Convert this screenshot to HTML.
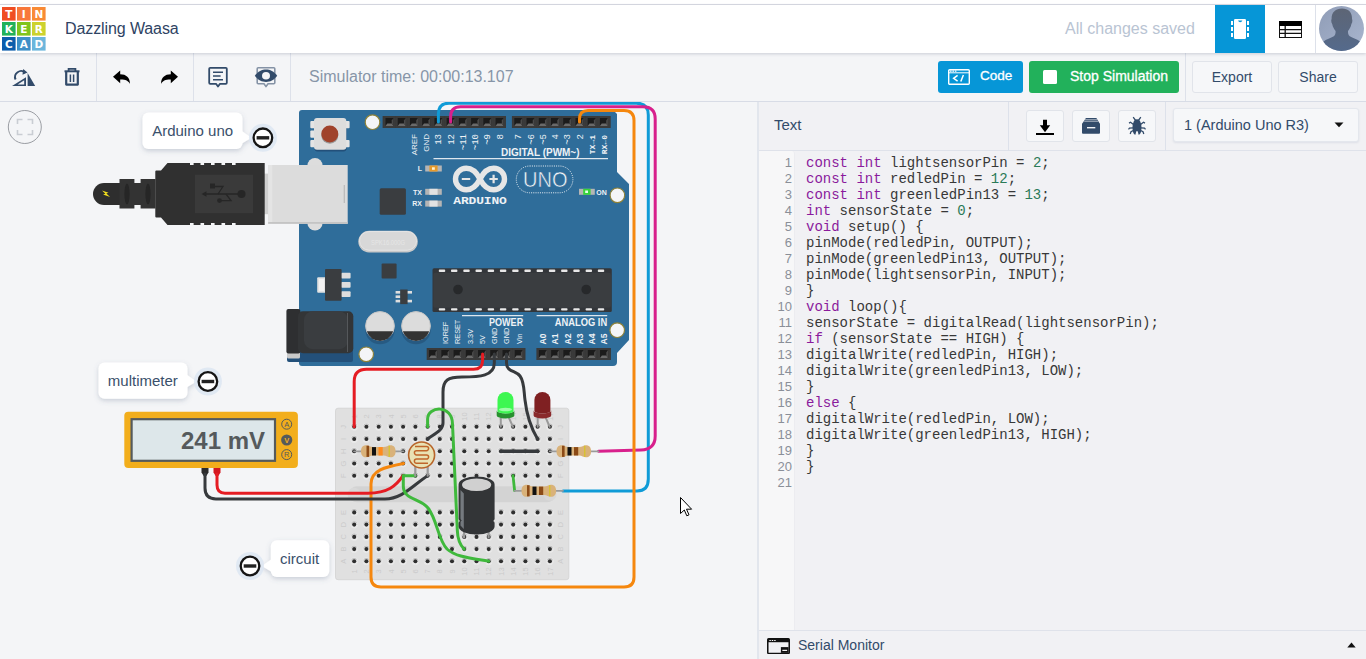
<!DOCTYPE html>
<html><head><meta charset="utf-8"><title>Dazzling Waasa</title>
<style>
*{box-sizing:border-box;margin:0;padding:0}
html,body{width:1366px;height:659px;overflow:hidden;background:#f4f5f7;font-family:"Liberation Sans",sans-serif;color:#324b6a}
.abs{position:absolute}
#topline{left:0;top:0;width:1366px;height:5px;background:#fff;border-bottom:1px solid #d9dbe3}
#topbar{left:0;top:5px;width:1366px;height:48px;background:#fff;box-shadow:0 1px 3px rgba(60,70,100,.22);z-index:5}
#logo{left:2px;top:2px;width:44px;height:44px}
#title{left:65px;top:14px;font-size:16px;line-height:20px;color:#2e4363;letter-spacing:-0.1px}
#saved{left:1065px;top:14px;font-size:16px;line-height:20px;color:#b9c4d3}
#circbtn{left:1215px;top:0;width:50px;height:48px;background:#0696d7}
#avatar{left:1319px;top:1px;width:45px;height:45px}
#toolbar{left:0;top:53px;width:1366px;height:49px;background:#f4f5f7;border-bottom:1px solid #d8dce6}
.vdiv{position:absolute;top:0;width:1px;height:48px;background:#dde1ea}
#simtime{left:309px;top:14px;font-size:16px;line-height:20px;color:#8795a8}
.btn{position:absolute;top:8px;height:32px;border-radius:3px;font-size:14px;line-height:32px;white-space:nowrap}
#codebtn{left:938px;width:85px;background:#0696d7;color:#fff;padding-left:42px;line-height:30px;font-size:13.500px;-webkit-text-stroke:.3px #fff}
#stopbtn{left:1029px;width:150px;background:#22b15b;color:#fff;padding-left:41px;line-height:30px;-webkit-text-stroke:.3px #fff}
#exportbtn{left:1192px;width:80px;border:1px solid #e1e4ea;color:#324b6a;background:#f6f7f9;line-height:30px;text-align:center}
#sharebtn{left:1278px;width:80px;border:1px solid #e1e4ea;color:#324b6a;background:#f6f7f9;line-height:30px;text-align:center}
#canvas{left:0;top:102px;width:757px;height:557px;background:#f4f5f7;overflow:hidden}
#panel{left:757px;top:102px;width:609px;height:557px;background:#f1f1f4;border-left:2px solid #e2e6ed}
#phead{left:0;top:0;width:607px;height:49px;background:#f1f1f4;border-bottom:1px solid #dfe2ea}
#gutter{left:0;top:49px;width:36px;height:479px;background:#f7f7f8;border-right:1px solid #ececf0;border-top-right-radius:3px}
#code{left:47px;top:53px;font-family:"Liberation Mono",monospace;font-size:14px;line-height:16px;color:#383838;white-space:pre}
#lnums{left:0;top:53px;width:33px;text-align:right;font-family:"Liberation Sans",sans-serif;font-size:13px;line-height:16px;color:#8a8f98;white-space:pre}
.hb{position:absolute;top:8px;width:38px;height:32px;border:1px solid #e1e4ea;border-radius:3px;background:#f6f7f9}
.k{color:#8a1a9c}.n{color:#2a7a57}
#serial{left:0;top:528px;width:607px;height:29px;border-top:1px solid #dfe2ea;background:#f1f1f4}
</style></head><body>
<div id="topline" class="abs"></div>
<div id="topbar" class="abs">
  <svg id="logo" class="abs" viewBox="0 0 44 44"><rect x="0" y="0" width="13.6" height="13.6" fill="#f04d23"/><text x="6.8" y="10.7" text-anchor="middle" font-family="DejaVu Sans, Liberation Sans, sans-serif" font-weight="bold" font-size="10.5" fill="#fff">T</text><rect x="15" y="0" width="13.6" height="13.6" fill="#f8783b"/><text x="21.8" y="10.7" text-anchor="middle" font-family="DejaVu Sans, Liberation Sans, sans-serif" font-weight="bold" font-size="10.5" fill="#fff">I</text><rect x="30" y="0" width="13.6" height="13.6" fill="#f98a35"/><text x="36.8" y="10.7" text-anchor="middle" font-family="DejaVu Sans, Liberation Sans, sans-serif" font-weight="bold" font-size="10.5" fill="#fff">N</text><rect x="0" y="15" width="13.6" height="13.6" fill="#22b15a"/><text x="6.8" y="25.7" text-anchor="middle" font-family="DejaVu Sans, Liberation Sans, sans-serif" font-weight="bold" font-size="10.5" fill="#fff">K</text><rect x="15" y="15" width="13.6" height="13.6" fill="#80c41c"/><text x="21.8" y="25.7" text-anchor="middle" font-family="DejaVu Sans, Liberation Sans, sans-serif" font-weight="bold" font-size="10.5" fill="#fff">E</text><rect x="30" y="15" width="13.6" height="13.6" fill="#cdd22d"/><text x="36.8" y="25.7" text-anchor="middle" font-family="DejaVu Sans, Liberation Sans, sans-serif" font-weight="bold" font-size="10.5" fill="#fff">R</text><rect x="0" y="30" width="13.6" height="13.6" fill="#0c5dac"/><text x="6.8" y="40.7" text-anchor="middle" font-family="DejaVu Sans, Liberation Sans, sans-serif" font-weight="bold" font-size="10.5" fill="#fff">C</text><rect x="15" y="30" width="13.6" height="13.6" fill="#3e90c8"/><text x="21.8" y="40.7" text-anchor="middle" font-family="DejaVu Sans, Liberation Sans, sans-serif" font-weight="bold" font-size="10.5" fill="#fff">A</text><rect x="30" y="30" width="13.6" height="13.6" fill="#6cb6dc"/><text x="36.8" y="40.7" text-anchor="middle" font-family="DejaVu Sans, Liberation Sans, sans-serif" font-weight="bold" font-size="10.5" fill="#fff">D</text></svg>
  <div id="title" class="abs">Dazzling Waasa</div>
  <div id="saved" class="abs">All changes saved</div>
  <div id="circbtn" class="abs"><svg class="abs" style="left:0;top:0" width="50" height="48" viewBox="0 0 50 48"><rect x="19" y="14" width="12" height="20" rx="1.2" fill="#fff"/><path d="M23 15.5h4.4q-.6 1.8-2.2 1.8t-2.2-1.8z" fill="#0696d7"/><g fill="#fff"><rect x="16" y="16" width="2" height="4"/><rect x="16" y="22" width="2" height="4"/><rect x="16" y="28" width="2" height="4"/><rect x="32" y="16" width="2" height="4"/><rect x="32" y="22" width="2" height="4"/><rect x="32" y="28" width="2" height="4"/></g></svg></div>
  <svg class="abs" style="left:1279px;top:16px" width="23" height="17" viewBox="0 0 23 17"><rect x="0.5" y="0.5" width="22" height="16" fill="#fff" stroke="#111" stroke-width="1"/><rect x="0" y="0" width="23" height="5" fill="#000"/><path d="M6.2 5v12M0 8.6h23M0 12.4h23" stroke="#111" stroke-width="1.3" fill="none"/></svg>
  <div class="abs" style="left:1315px;top:0;width:1px;height:48px;background:#dde1ea"></div>
  <div id="avatar" class="abs"><svg width="45" height="45" viewBox="0 0 45 45"><defs><linearGradient id="avg" x1="0" y1="0" x2="1" y2="1"><stop offset="0" stop-color="#8f9cb6"/><stop offset="1" stop-color="#a9b6cf"/></linearGradient><linearGradient id="avs" x1="0" y1="0" x2="0" y2="1"><stop offset="0" stop-color="#5d6575"/><stop offset="1" stop-color="#546a8c"/></linearGradient><clipPath id="avc"><circle cx="22.5" cy="22.5" r="22.5"/></clipPath></defs><g clip-path="url(#avc)"><rect width="45" height="45" fill="url(#avg)"/><path d="M23 2.5c6.5 0 10.3 4 10 10.5c.6 1 .5 3.500-.6 5c-.5 3-2.200 5.500-3.400 7c0 2.500.2 4 1.800 5.200c3.500 2.300 9.500 3 12.500 7.800v8h-41v-8c3-4.800 9-5.500 12.500-7.800c1.600-1.200 1.800-2.700 1.800-5.200c-1.200-1.500-2.900-4-3.400-7c-1.100-1.500-1.200-4-.6-5c-.3-6.500 3.900-10.500 10.400-10.500z" fill="url(#avs)"/></g></svg></div>
</div>
<div id="toolbar" class="abs">
  <div class="vdiv" style="left:96px"></div>
  <div class="vdiv" style="left:193px"></div>
  <div class="vdiv" style="left:290px"></div>
  <div class="vdiv" style="left:1185px"></div>

  <svg class="abs" style="left:10px;top:14px" width="28" height="20" viewBox="0 0 28 20"><g fill="none" stroke="#324b6a" stroke-width="1.9"><path d="M5.600 12.500a6 6 0 0 1 9.600-6.800"/></g><path d="M13.200 2l4.300 3.600-5 2.200z" fill="#324b6a"/><path d="M2 19L16 10.300V19z" fill="#324b6a"/><path d="M7.600 17.400l6.600-4.100v4.100z" fill="#f4f5f7"/><path d="M17.600 6L25.200 19H17.600z" fill="#324b6a"/></svg>
  <svg class="abs" style="left:63px;top:14px" width="18" height="20" viewBox="0 0 18 20"><path d="M1.500 4.300h15" stroke="#324b6a" stroke-width="2" fill="none"/><path d="M5.600 4V1.800h6.800V4" stroke="#324b6a" stroke-width="1.800" fill="none"/><path d="M3.200 5v12.600h11.600V5" stroke="#324b6a" stroke-width="2.200" fill="none" stroke-linejoin="round"/><path d="M7.400 7.500v7.500M10.600 7.500v7.500" stroke="#324b6a" stroke-width="1.500" fill="none"/></svg>
  <svg class="abs" style="left:112px;top:17px" width="20" height="15" viewBox="0 0 20 15"><path d="M8.200 0.600v3.700c6 0 9.800 3.300 9.800 9.700c-1.700-3.400-4.500-4.600-9.800-4.500v3.700L1 6.800z" fill="#000"/></svg>
  <svg class="abs" style="left:159px;top:17px" width="20" height="15" viewBox="0 0 20 15"><path d="M11.800 0.600v3.700c-6 0-9.800 3.300-9.800 9.700c1.700-3.400 4.500-4.600 9.800-4.500v3.700L19 6.800z" fill="#000"/></svg>
  <svg class="abs" style="left:208px;top:13px" width="20" height="22" viewBox="0 0 20 22"><path d="M2.200 1.800h15.600q1 0 1 1v14q0 1-1 1h-5.800L10 20.600 8 17.800H2.200q-1 0-1-1v-14q0-1 1-1z" fill="none" stroke="#324b6a" stroke-width="1.800" stroke-linejoin="round"/><path d="M5 6.200h10M5 10h7.600M5 13.800h10" stroke="#324b6a" stroke-width="1.600" fill="none"/></svg>
  <svg class="abs" style="left:254px;top:13px" width="24" height="22" viewBox="0 0 24 22"><path d="M4.200 1.800h15.600q1 0 1 1v14q0 1-1 1h-5.800L12 20.600 10 17.800H4.200q-1 0-1-1v-14q0-1 1-1z" fill="none" stroke="#8593a6" stroke-width="1.600" stroke-linejoin="round"/><path d="M0.800 9.800C4 5.400 8 3.600 12 3.600s8 1.800 11.200 6.200C20 14.200 16 16 12 16S4 14.200 0.800 9.800z" fill="#324b6a"/><ellipse cx="12" cy="9.800" rx="4" ry="3.800" fill="#f4f5f7"/></svg>
  <div id="simtime" class="abs">Simulator time: 00:00:13.107</div>
  <div id="codebtn" class="btn"><svg class="abs" style="left:10px;top:8px" width="22" height="16" viewBox="0 0 22 16"><rect x="0.700" y="0.700" width="20.600" height="14.600" rx="1" fill="none" stroke="#fff" stroke-width="1.400"/><path d="M1 3.800h20" stroke="#fff" stroke-width="1"/><path d="M2 1.400h1.600v1.300H2zM4.400 1.400h1.600v1.300H4.400zM6.800 1.400h1.600v1.300H6.800z" fill="#fff"/><path d="M9.600 6.400L5.600 9.300l4 2.900M15.400 6l-2.600 6.600" fill="none" stroke="#fff" stroke-width="1.500"/></svg>Code</div>
  <div id="stopbtn" class="btn"><div class="abs" style="left:14px;top:9px;width:14px;height:14px;background:#fff;border-radius:1.500px"></div>Stop Simulation</div>
  <div id="exportbtn" class="btn">Export</div>
  <div id="sharebtn" class="btn">Share</div>
</div>
<div id="canvas" class="abs">
<!--CANVAS--><svg class="abs" style="left:0;top:0" width="757" height="557" viewBox="0 102 757 557" font-family="Liberation Sans, sans-serif">
<defs>
<filter id="lsh" x="-20%" y="-30%" width="140%" height="180%"><feDropShadow dx="0" dy="2" stdDeviation="2.500" flood-color="#5a6a85" flood-opacity=".28"/></filter>
<g id="pin"><rect x="-6.120" y="-6" width="12.240" height="12" fill="#3a3a3a"/><rect x="-4" y="-4" width="8" height="8" fill="#1b1b1b"/><path d="M-4 4L-2.200 1.600H2.200L4 4z" fill="#6a6a6a"/><path d="M4 -4L2.200 -1.600V1.600L4 4z" fill="#4a4a4a"/></g>
<g id="hole"><circle r="3.700" fill="#ebebeb"/><circle r="3" cy="-.3" fill="#bcbcbc"/><circle r="3" cy=".7" fill="#e9e9e9"/><circle r="2.050" fill="#2f2f2f"/></g>
<g id="minus"><circle r="14" fill="#d9e4f2" opacity=".75"/><circle r="9.300" fill="#fff" stroke="#151515" stroke-width="2.300"/><rect x="-6.300" y="-1.700" width="12.600" height="3.400" fill="#222"/></g>
</defs>
<g><circle cx="24.800" cy="127" r="16.500" fill="none" stroke="#9a9da3" stroke-width="1"/><path d="M17.500 124v-4.500h5M27.500 119.500h5v4.500M32.500 130v4.500h-5M22.500 134.500h-5v-4.500" fill="none" stroke="#c9cdd3" stroke-width="1.600"/></g>
<g id="arduino">
<path d="M302 110H613L617 114V172L629 184V340L617 353V362Q617 366 613 366H302Q299 366 299 363V113Q299 110 302 110z" fill="#2f6d9a"/>
<circle cx="315" cy="165.500" r="7.600" fill="#dddddd"/><circle cx="315" cy="223" r="7.600" fill="#dddddd"/>
<circle cx="372.5" cy="122.2" r="7.300" fill="#f4f5f7" stroke="#8f8238" stroke-width="1.200"/>
<circle cx="617.4" cy="195.3" r="7.300" fill="#f4f5f7" stroke="#8f8238" stroke-width="1.200"/>
<circle cx="617.2" cy="330.2" r="7.300" fill="#f4f5f7" stroke="#8f8238" stroke-width="1.200"/>
<circle cx="366.2" cy="354.3" r="7.300" fill="#f4f5f7" stroke="#8f8238" stroke-width="1.200"/>
<rect x="314.500" y="120" width="32" height="31.500" rx="3" fill="#23507a"/>
<rect x="310.300" y="121" width="5" height="7.200" rx="1" fill="#e4e4e4"/>
<rect x="310.300" y="130.5" width="5" height="7.200" rx="1" fill="#e4e4e4"/>
<rect x="310.300" y="140" width="5" height="7.200" rx="1" fill="#e4e4e4"/>
<rect x="345" y="121" width="4.600" height="7.200" rx="1" fill="#e4e4e4"/>
<rect x="345" y="140" width="4.600" height="7.200" rx="1" fill="#e4e4e4"/>
<rect x="314" y="118" width="32.300" height="31.800" rx="3" fill="#dddddd"/><circle cx="329.800" cy="135.200" r="8.500" fill="#9a9a9a"/><circle cx="329.800" cy="134" r="8.500" fill="#a0432c"/>
<rect x="382.600" y="116" width="123.3" height="12" fill="#3a3a3a"/>
<use href="#pin" x="389.51" y="122"/>
<use href="#pin" x="401.75" y="122"/>
<use href="#pin" x="413.97" y="122"/>
<use href="#pin" x="426.20" y="122"/>
<use href="#pin" x="438.44" y="122"/>
<use href="#pin" x="450.66" y="122"/>
<use href="#pin" x="462.89" y="122"/>
<use href="#pin" x="475.12" y="122"/>
<use href="#pin" x="487.36" y="122"/>
<use href="#pin" x="499.58" y="122"/>
<rect x="511.900" y="116" width="98.8" height="12" fill="#3a3a3a"/>
<use href="#pin" x="518.32" y="122"/>
<use href="#pin" x="530.55" y="122"/>
<use href="#pin" x="542.78" y="122"/>
<use href="#pin" x="555.01" y="122"/>
<use href="#pin" x="567.24" y="122"/>
<use href="#pin" x="579.47" y="122"/>
<use href="#pin" x="591.70" y="122"/>
<use href="#pin" x="603.93" y="122"/>
<rect x="426.700" y="348" width="98.8" height="12" fill="#3a3a3a"/>
<use href="#pin" x="433.12" y="354"/>
<use href="#pin" x="445.35" y="354"/>
<use href="#pin" x="457.57" y="354"/>
<use href="#pin" x="469.81" y="354"/>
<use href="#pin" x="482.04" y="354"/>
<use href="#pin" x="494.26" y="354"/>
<use href="#pin" x="506.50" y="354"/>
<use href="#pin" x="518.73" y="354"/>
<rect x="536.500" y="348" width="74.4" height="12" fill="#3a3a3a"/>
<use href="#pin" x="542.91" y="354"/>
<use href="#pin" x="555.14" y="354"/>
<use href="#pin" x="567.38" y="354"/>
<use href="#pin" x="579.61" y="354"/>
<use href="#pin" x="591.83" y="354"/>
<use href="#pin" x="604.06" y="354"/>
<text transform="translate(417.0 134) rotate(-90)" text-anchor="end" font-size="8" font-weight="normal" fill="#eef2f6">AREF</text>
<text transform="translate(429.2 134) rotate(-90)" text-anchor="end" font-size="8" font-weight="normal" fill="#eef2f6">GND</text>
<text transform="translate(441.4 134) rotate(-90)" text-anchor="end" font-size="9" font-weight="normal" fill="#eef2f6" font-family="Liberation Mono, monospace">13</text>
<text transform="translate(453.7 134) rotate(-90)" text-anchor="end" font-size="9" font-weight="normal" fill="#eef2f6" font-family="Liberation Mono, monospace">12</text>
<text transform="translate(465.9 134) rotate(-90)" text-anchor="end" font-size="9" font-weight="normal" fill="#eef2f6" font-family="Liberation Mono, monospace">~11</text>
<text transform="translate(478.1 134) rotate(-90)" text-anchor="end" font-size="9" font-weight="normal" fill="#eef2f6" font-family="Liberation Mono, monospace">~10</text>
<text transform="translate(490.4 134) rotate(-90)" text-anchor="end" font-size="9" font-weight="normal" fill="#eef2f6" font-family="Liberation Mono, monospace">~9</text>
<text transform="translate(502.6 134) rotate(-90)" text-anchor="end" font-size="9" font-weight="normal" fill="#eef2f6" font-family="Liberation Mono, monospace">8</text>
<text transform="translate(521.3 134) rotate(-90)" text-anchor="end" font-size="9" font-weight="normal" fill="#eef2f6" font-family="Liberation Mono, monospace">7</text>
<text transform="translate(533.5 134) rotate(-90)" text-anchor="end" font-size="9" font-weight="normal" fill="#eef2f6" font-family="Liberation Mono, monospace">~6</text>
<text transform="translate(545.8 134) rotate(-90)" text-anchor="end" font-size="9" font-weight="normal" fill="#eef2f6" font-family="Liberation Mono, monospace">~5</text>
<text transform="translate(558.0 134) rotate(-90)" text-anchor="end" font-size="9" font-weight="normal" fill="#eef2f6" font-family="Liberation Mono, monospace">4</text>
<text transform="translate(570.2 134) rotate(-90)" text-anchor="end" font-size="9" font-weight="normal" fill="#eef2f6" font-family="Liberation Mono, monospace">~3</text>
<text transform="translate(582.5 134) rotate(-90)" text-anchor="end" font-size="9" font-weight="normal" fill="#eef2f6" font-family="Liberation Mono, monospace">2</text>
<text transform="translate(594.7 135) rotate(-90)" text-anchor="end" font-size="8" font-weight="bold" fill="#eef2f6" font-family="Liberation Mono, monospace">TX→1</text>
<text transform="translate(606.9 135) rotate(-90)" text-anchor="end" font-size="8" font-weight="bold" fill="#eef2f6" font-family="Liberation Mono, monospace">RX←0</text>
<text x="579.500" y="155.600" text-anchor="end" font-size="10" font-weight="bold" fill="#eef2f6" textLength="78.500" lengthAdjust="spacingAndGlyphs">DIGITAL (PWM~)</text>
<path d="M433.500 158.600H608" stroke="#dfe7ee" stroke-width="1.400"/>
<rect x="425.2" y="165.5" width="16.6" height="6" fill="#b5b5b5"/><rect x="429.4" y="165.5" width="8.200000000000001" height="6" fill="#e59a2c"/>
<rect x="432" y="167.300" width="2.800" height="2.500" fill="#fff3d0"/>
<rect x="425.2" y="188.8" width="16.6" height="6" fill="#b5b5b5"/><rect x="429.4" y="188.8" width="8.200000000000001" height="6" fill="#e2e2e2"/>
<rect x="425.2" y="200.6" width="16.6" height="6" fill="#b5b5b5"/><rect x="429.4" y="200.6" width="8.200000000000001" height="6" fill="#e2e2e2"/>
<text x="422" y="171.400" text-anchor="end" font-size="7" font-weight="bold" fill="#eef2f6">L</text>
<text x="422" y="194.600" text-anchor="end" font-size="7" font-weight="bold" fill="#eef2f6">TX</text>
<text x="422" y="206.400" text-anchor="end" font-size="7" font-weight="bold" fill="#eef2f6">RX</text>
<rect x="579" y="188.8" width="15.8" height="6" fill="#b5b5b5"/><rect x="583.2" y="188.8" width="7.4" height="6" fill="#35d43a"/>
<rect x="585.200" y="190.500" width="2.800" height="2.500" fill="#e8ffe8"/>
<text x="596.300" y="194.600" font-size="7" font-weight="bold" fill="#eef2f6">ON</text>
<g fill="none" stroke="#e6e6e6" stroke-width="5.400"><path d="M480 179C476 171 471 168.200 466.300 168.200a10.800 10.800 0 0 0 0 21.600C471 189.800 476 187 480 179C484 171 489 168.200 493.700 168.200a10.800 10.800 0 0 1 0 21.600C489 189.800 484 187 480 179z"/></g>
<path d="M461.800 179h8.400M489.400 179h8.400M493.600 174.800v8.400" stroke="#e6e6e6" stroke-width="2.200" fill="none"/>
<text x="480" y="204.200" text-anchor="middle" font-family="Liberation Mono, monospace" font-weight="bold" font-size="11.500" letter-spacing="-.1" fill="#eef2f6" textLength="53.500" lengthAdjust="spacingAndGlyphs">ARDUINO</text>
<rect x="516.300" y="166" width="56.600" height="26.800" rx="13.400" fill="none" stroke="#eef2f6" stroke-width="1" stroke-dasharray="1 1.200"/>
<text x="545.300" y="187.300" text-anchor="middle" font-size="22.500" fill="#f8fafc" stroke="#2f6d9a" stroke-width=".55" textLength="44.500" lengthAdjust="spacingAndGlyphs">UNO</text>
<rect x="379.700" y="188.200" width="26.200" height="26.600" rx="1.500" fill="#3a3d40"/>
<rect x="381.600" y="263.600" width="15" height="15" rx="1" fill="#3a3d40"/>
<rect x="358.300" y="230.800" width="59.500" height="21.600" rx="10.800" fill="#c9c9c9"/><rect x="359.600" y="231.600" width="56.900" height="18.600" rx="9.300" fill="#d8d8d8" stroke="#e6e6e6" stroke-width="1"/>
<text x="388" y="244.500" text-anchor="middle" font-size="8" fill="#e6e6e6" textLength="34" lengthAdjust="spacingAndGlyphs">SPK16.000G</text>
<rect x="317.200" y="277.200" width="9" height="15.600" rx="1" fill="#e2e2e2"/><rect x="319" y="279" width="5" height="12" fill="#f2f2f2"/>
<rect x="341" y="272.7" width="9.600" height="5.800" rx="1" fill="#dedede"/>
<rect x="341" y="282" width="9.600" height="5.800" rx="1" fill="#dedede"/>
<rect x="341" y="291.2" width="9.600" height="5.800" rx="1" fill="#dedede"/>
<rect x="325" y="268.900" width="16.600" height="31.800" rx="1" fill="#3a3d40"/>
<rect x="395.600" y="291" width="5" height="2.600" fill="#dedede"/>
<rect x="395.600" y="295.4" width="5" height="2.600" fill="#dedede"/>
<rect x="395.600" y="299.8" width="5" height="2.600" fill="#dedede"/>
<rect x="407" y="291" width="5" height="2.600" fill="#dedede"/>
<rect x="407" y="299.8" width="5" height="2.600" fill="#dedede"/>
<rect x="400.200" y="289.500" width="7.400" height="14.600" fill="#3a3d40"/>
<rect x="432.500" y="268.200" width="179.300" height="43.800" rx="1.500" fill="#33363a"/>
<rect x="438.8" y="269.600" width="6.400" height="2.400" rx=".8" fill="#e8e8e8"/><rect x="438.8" y="308.200" width="6.400" height="2.400" rx=".8" fill="#e8e8e8"/>
<rect x="451.0" y="269.600" width="6.400" height="2.400" rx=".8" fill="#e8e8e8"/><rect x="451.0" y="308.200" width="6.400" height="2.400" rx=".8" fill="#e8e8e8"/>
<rect x="463.3" y="269.600" width="6.400" height="2.400" rx=".8" fill="#e8e8e8"/><rect x="463.3" y="308.200" width="6.400" height="2.400" rx=".8" fill="#e8e8e8"/>
<rect x="475.5" y="269.600" width="6.400" height="2.400" rx=".8" fill="#e8e8e8"/><rect x="475.5" y="308.200" width="6.400" height="2.400" rx=".8" fill="#e8e8e8"/>
<rect x="487.7" y="269.600" width="6.400" height="2.400" rx=".8" fill="#e8e8e8"/><rect x="487.7" y="308.200" width="6.400" height="2.400" rx=".8" fill="#e8e8e8"/>
<rect x="499.9" y="269.600" width="6.400" height="2.400" rx=".8" fill="#e8e8e8"/><rect x="499.9" y="308.200" width="6.400" height="2.400" rx=".8" fill="#e8e8e8"/>
<rect x="512.2" y="269.600" width="6.400" height="2.400" rx=".8" fill="#e8e8e8"/><rect x="512.2" y="308.200" width="6.400" height="2.400" rx=".8" fill="#e8e8e8"/>
<rect x="524.4" y="269.600" width="6.400" height="2.400" rx=".8" fill="#e8e8e8"/><rect x="524.4" y="308.200" width="6.400" height="2.400" rx=".8" fill="#e8e8e8"/>
<rect x="536.6" y="269.600" width="6.400" height="2.400" rx=".8" fill="#e8e8e8"/><rect x="536.6" y="308.200" width="6.400" height="2.400" rx=".8" fill="#e8e8e8"/>
<rect x="548.9" y="269.600" width="6.400" height="2.400" rx=".8" fill="#e8e8e8"/><rect x="548.9" y="308.200" width="6.400" height="2.400" rx=".8" fill="#e8e8e8"/>
<rect x="561.1" y="269.600" width="6.400" height="2.400" rx=".8" fill="#e8e8e8"/><rect x="561.1" y="308.200" width="6.400" height="2.400" rx=".8" fill="#e8e8e8"/>
<rect x="573.3" y="269.600" width="6.400" height="2.400" rx=".8" fill="#e8e8e8"/><rect x="573.3" y="308.200" width="6.400" height="2.400" rx=".8" fill="#e8e8e8"/>
<rect x="585.6" y="269.600" width="6.400" height="2.400" rx=".8" fill="#e8e8e8"/><rect x="585.6" y="308.200" width="6.400" height="2.400" rx=".8" fill="#e8e8e8"/>
<rect x="597.8" y="269.600" width="6.400" height="2.400" rx=".8" fill="#e8e8e8"/><rect x="597.8" y="308.200" width="6.400" height="2.400" rx=".8" fill="#e8e8e8"/>
<rect x="433.300" y="272.700" width="177.700" height="35" rx="2" fill="#3a3d40"/>
<circle cx="458" cy="289.500" r="4.800" fill="#27292b"/><circle cx="586.200" cy="289.500" r="4.800" fill="#27292b"/>
<path d="M462 315.700H523.200M536.600 315.700H607.200" stroke="#dfe7ee" stroke-width="1.300"/>
<text x="523.200" y="326" text-anchor="end" font-size="10" font-weight="bold" fill="#eef2f6" textLength="34.200" lengthAdjust="spacingAndGlyphs">POWER</text>
<text x="607.200" y="326" text-anchor="end" font-size="10" font-weight="bold" fill="#eef2f6" textLength="52.500" lengthAdjust="spacingAndGlyphs">ANALOG IN</text>
<text transform="translate(448.1 344) rotate(-90)" font-size="7.300" fill="#eef2f6">IOREF</text>
<text transform="translate(460.4 344) rotate(-90)" font-size="7.300" fill="#eef2f6">RESET</text>
<text transform="translate(472.6 344) rotate(-90)" font-size="7.300" fill="#eef2f6">3.3V</text>
<text transform="translate(484.8 344) rotate(-90)" font-size="7.300" fill="#eef2f6">5V</text>
<text transform="translate(497.1 344) rotate(-90)" font-size="7.300" fill="#eef2f6">GND</text>
<text transform="translate(509.3 344) rotate(-90)" font-size="7.300" fill="#eef2f6">GND</text>
<text transform="translate(521.5 344) rotate(-90)" font-size="7.300" fill="#eef2f6">Vin</text>
<text transform="translate(546.1 344.500) rotate(-90)" font-size="8.500" font-weight="bold" fill="#eef2f6">A0</text>
<text transform="translate(558.3 344.500) rotate(-90)" font-size="8.500" font-weight="bold" fill="#eef2f6">A1</text>
<text transform="translate(570.6 344.500) rotate(-90)" font-size="8.500" font-weight="bold" fill="#eef2f6">A2</text>
<text transform="translate(582.8 344.500) rotate(-90)" font-size="8.500" font-weight="bold" fill="#eef2f6">A3</text>
<text transform="translate(595.0 344.500) rotate(-90)" font-size="8.500" font-weight="bold" fill="#eef2f6">A4</text>
<text transform="translate(607.3 344.500) rotate(-90)" font-size="8.500" font-weight="bold" fill="#eef2f6">A5</text>
<circle cx="380" cy="329.500" r="14.800" fill="#275a82"/><circle cx="380" cy="326" r="14.400" fill="#dcdcdc" stroke="#c6c6c6" stroke-width="1"/>
<path d="M366.8 331.200H393.2A13.800 13.800 0 0 1 366.8 331.200z" fill="#333"/>
<circle cx="416" cy="329.500" r="14.800" fill="#275a82"/><circle cx="416" cy="326" r="14.400" fill="#dcdcdc" stroke="#c6c6c6" stroke-width="1"/>
<path d="M402.8 331.200H429.2A13.800 13.800 0 0 1 402.8 331.200z" fill="#333"/>
<rect x="287" y="348" width="66" height="14" rx="2" fill="#23507a"/>
<rect x="287" y="350" width="13" height="8.600" rx="1.500" fill="#c9c9c9"/>
<rect x="286.400" y="309" width="14" height="44.600" rx="2" fill="#2e2f31"/>
<rect x="298" y="311.200" width="55.300" height="42" rx="5" fill="#333537"/><rect x="304" y="311.200" width="44" height="38" rx="9" fill="#3a3d40"/><path d="M347.500 313v39" stroke="#55585b" stroke-width="1"/>
</g>
<g id="usb">
<rect x="264" y="173.600" width="6" height="40.600" fill="#cfcfcf"/>
<rect x="268.200" y="165" width="79.500" height="58.800" fill="#dcdcdc"/><rect x="268.200" y="165" width="4" height="58.800" fill="#e4e4e4"/><rect x="268.200" y="222" width="79.500" height="1.800" fill="#c4c4c4"/><path d="M344.300 185v18" stroke="#b8b8b8" stroke-width="1.200"/>
<path d="M104 183H120V205H104A11 11 0 0 1 104 183z" fill="#2e2e2e"/>
<path d="M119.500 179H134.400V183H140.600V179H155.500V208.600H140.600V205H134.400V208.600H119.500z" fill="#333"/><ellipse cx="127" cy="194" rx="2.600" ry="10.500" fill="#262626"/><ellipse cx="148" cy="194" rx="2.600" ry="10.500" fill="#262626"/>
<path d="M155.300 171.500Q155.300 170.500 156.300 170.500H161L167.500 163H264.700V225H167.500L161 217.500H156.300Q155.300 217.500 155.300 216.500z" fill="#303030"/>
<rect x="190.0" y="162.500" width="3.600" height="2.500" fill="#f4f5f7"/><rect x="190.0" y="223" width="3.600" height="2.500" fill="#f4f5f7"/>
<rect x="200.5" y="162.500" width="3.600" height="2.500" fill="#f4f5f7"/><rect x="200.5" y="223" width="3.600" height="2.500" fill="#f4f5f7"/>
<rect x="211.0" y="162.500" width="3.600" height="2.500" fill="#f4f5f7"/><rect x="211.0" y="223" width="3.600" height="2.500" fill="#f4f5f7"/>
<rect x="221.5" y="162.500" width="3.600" height="2.500" fill="#f4f5f7"/><rect x="221.5" y="223" width="3.600" height="2.500" fill="#f4f5f7"/>
<rect x="232.0" y="162.500" width="3.600" height="2.500" fill="#f4f5f7"/><rect x="232.0" y="223" width="3.600" height="2.500" fill="#f4f5f7"/>
<rect x="195" y="174.700" width="58" height="38.400" fill="#3a3a3a"/>
<g stroke="#262626" fill="#262626" stroke-width="1.300"><path d="M206 194H240" fill="none"/><path d="M201.500 194l5-2.800v5.600z" stroke="none"/><circle cx="241.500" cy="194" r="4" stroke="none"/><path d="M218 194l5-7.500h-8" fill="none"/><rect x="210" y="183.500" width="5" height="5" stroke="none"/><path d="M226 194l5 6.600h-10.500" fill="none"/><circle cx="219.500" cy="200.600" r="2.400" stroke="none"/></g>
<path d="M102 190.500l6.500 2.200-2.200.8 3.800 3.600-7-2.500 2.300-.8z" fill="#f5e21d"/>
</g>
<g id="bb">
<rect x="335.500" y="408.200" width="233.300" height="171.500" rx="2.500" fill="#e0e0e0" stroke="#d2d2d2" stroke-width=".8"/>
<rect x="349" y="486.300" width="206" height="16" rx="8" fill="#d3d3d3"/><circle cx="354" cy="494.300" r="6.500" fill="#d8d8d8"/><circle cx="550" cy="494.300" r="6.500" fill="#d8d8d8"/>
<use href="#hole" x="354.2" y="426.8"/>
<use href="#hole" x="366.4" y="426.8"/>
<use href="#hole" x="378.7" y="426.8"/>
<use href="#hole" x="390.9" y="426.8"/>
<use href="#hole" x="403.1" y="426.8"/>
<use href="#hole" x="415.4" y="426.8"/>
<use href="#hole" x="427.6" y="426.8"/>
<use href="#hole" x="439.8" y="426.8"/>
<use href="#hole" x="452.0" y="426.8"/>
<use href="#hole" x="464.3" y="426.8"/>
<use href="#hole" x="476.5" y="426.8"/>
<use href="#hole" x="488.7" y="426.8"/>
<use href="#hole" x="501.0" y="426.8"/>
<use href="#hole" x="513.2" y="426.8"/>
<use href="#hole" x="525.4" y="426.8"/>
<use href="#hole" x="537.6" y="426.8"/>
<use href="#hole" x="549.9" y="426.8"/>
<text transform="translate(345.500 426.8) rotate(-90)" text-anchor="middle" font-size="7.500" fill="#cbcbcb">J</text>
<text transform="translate(562.500 426.8) rotate(-90)" text-anchor="middle" font-size="7.500" fill="#cbcbcb">J</text>
<use href="#hole" x="354.2" y="439.0"/>
<use href="#hole" x="366.4" y="439.0"/>
<use href="#hole" x="378.7" y="439.0"/>
<use href="#hole" x="390.9" y="439.0"/>
<use href="#hole" x="403.1" y="439.0"/>
<use href="#hole" x="415.4" y="439.0"/>
<use href="#hole" x="427.6" y="439.0"/>
<use href="#hole" x="439.8" y="439.0"/>
<use href="#hole" x="452.0" y="439.0"/>
<use href="#hole" x="464.3" y="439.0"/>
<use href="#hole" x="476.5" y="439.0"/>
<use href="#hole" x="488.7" y="439.0"/>
<use href="#hole" x="501.0" y="439.0"/>
<use href="#hole" x="513.2" y="439.0"/>
<use href="#hole" x="525.4" y="439.0"/>
<use href="#hole" x="537.6" y="439.0"/>
<use href="#hole" x="549.9" y="439.0"/>
<text transform="translate(345.500 439.0) rotate(-90)" text-anchor="middle" font-size="7.500" fill="#cbcbcb">I</text>
<text transform="translate(562.500 439.0) rotate(-90)" text-anchor="middle" font-size="7.500" fill="#cbcbcb">I</text>
<use href="#hole" x="354.2" y="451.3"/>
<use href="#hole" x="366.4" y="451.3"/>
<use href="#hole" x="378.7" y="451.3"/>
<use href="#hole" x="390.9" y="451.3"/>
<use href="#hole" x="403.1" y="451.3"/>
<use href="#hole" x="415.4" y="451.3"/>
<use href="#hole" x="427.6" y="451.3"/>
<use href="#hole" x="439.8" y="451.3"/>
<use href="#hole" x="452.0" y="451.3"/>
<use href="#hole" x="464.3" y="451.3"/>
<use href="#hole" x="476.5" y="451.3"/>
<use href="#hole" x="488.7" y="451.3"/>
<use href="#hole" x="501.0" y="451.3"/>
<use href="#hole" x="513.2" y="451.3"/>
<use href="#hole" x="525.4" y="451.3"/>
<use href="#hole" x="537.6" y="451.3"/>
<use href="#hole" x="549.9" y="451.3"/>
<text transform="translate(345.500 451.3) rotate(-90)" text-anchor="middle" font-size="7.500" fill="#cbcbcb">H</text>
<text transform="translate(562.500 451.3) rotate(-90)" text-anchor="middle" font-size="7.500" fill="#cbcbcb">H</text>
<use href="#hole" x="354.2" y="463.5"/>
<use href="#hole" x="366.4" y="463.5"/>
<use href="#hole" x="378.7" y="463.5"/>
<use href="#hole" x="390.9" y="463.5"/>
<use href="#hole" x="403.1" y="463.5"/>
<use href="#hole" x="415.4" y="463.5"/>
<use href="#hole" x="427.6" y="463.5"/>
<use href="#hole" x="439.8" y="463.5"/>
<use href="#hole" x="452.0" y="463.5"/>
<use href="#hole" x="464.3" y="463.5"/>
<use href="#hole" x="476.5" y="463.5"/>
<use href="#hole" x="488.7" y="463.5"/>
<use href="#hole" x="501.0" y="463.5"/>
<use href="#hole" x="513.2" y="463.5"/>
<use href="#hole" x="525.4" y="463.5"/>
<use href="#hole" x="537.6" y="463.5"/>
<use href="#hole" x="549.9" y="463.5"/>
<text transform="translate(345.500 463.5) rotate(-90)" text-anchor="middle" font-size="7.500" fill="#cbcbcb">G</text>
<text transform="translate(562.500 463.5) rotate(-90)" text-anchor="middle" font-size="7.500" fill="#cbcbcb">G</text>
<use href="#hole" x="354.2" y="475.7"/>
<use href="#hole" x="366.4" y="475.7"/>
<use href="#hole" x="378.7" y="475.7"/>
<use href="#hole" x="390.9" y="475.7"/>
<use href="#hole" x="403.1" y="475.7"/>
<use href="#hole" x="415.4" y="475.7"/>
<use href="#hole" x="427.6" y="475.7"/>
<use href="#hole" x="439.8" y="475.7"/>
<use href="#hole" x="452.0" y="475.7"/>
<use href="#hole" x="464.3" y="475.7"/>
<use href="#hole" x="476.5" y="475.7"/>
<use href="#hole" x="488.7" y="475.7"/>
<use href="#hole" x="501.0" y="475.7"/>
<use href="#hole" x="513.2" y="475.7"/>
<use href="#hole" x="525.4" y="475.7"/>
<use href="#hole" x="537.6" y="475.7"/>
<use href="#hole" x="549.9" y="475.7"/>
<text transform="translate(345.500 475.7) rotate(-90)" text-anchor="middle" font-size="7.500" fill="#cbcbcb">F</text>
<text transform="translate(562.500 475.7) rotate(-90)" text-anchor="middle" font-size="7.500" fill="#cbcbcb">F</text>
<use href="#hole" x="354.2" y="512.4"/>
<use href="#hole" x="366.4" y="512.4"/>
<use href="#hole" x="378.7" y="512.4"/>
<use href="#hole" x="390.9" y="512.4"/>
<use href="#hole" x="403.1" y="512.4"/>
<use href="#hole" x="415.4" y="512.4"/>
<use href="#hole" x="427.6" y="512.4"/>
<use href="#hole" x="439.8" y="512.4"/>
<use href="#hole" x="452.0" y="512.4"/>
<use href="#hole" x="464.3" y="512.4"/>
<use href="#hole" x="476.5" y="512.4"/>
<use href="#hole" x="488.7" y="512.4"/>
<use href="#hole" x="501.0" y="512.4"/>
<use href="#hole" x="513.2" y="512.4"/>
<use href="#hole" x="525.4" y="512.4"/>
<use href="#hole" x="537.6" y="512.4"/>
<use href="#hole" x="549.9" y="512.4"/>
<text transform="translate(345.500 512.4) rotate(-90)" text-anchor="middle" font-size="7.500" fill="#cbcbcb">E</text>
<text transform="translate(562.500 512.4) rotate(-90)" text-anchor="middle" font-size="7.500" fill="#cbcbcb">E</text>
<use href="#hole" x="354.2" y="524.6"/>
<use href="#hole" x="366.4" y="524.6"/>
<use href="#hole" x="378.7" y="524.6"/>
<use href="#hole" x="390.9" y="524.6"/>
<use href="#hole" x="403.1" y="524.6"/>
<use href="#hole" x="415.4" y="524.6"/>
<use href="#hole" x="427.6" y="524.6"/>
<use href="#hole" x="439.8" y="524.6"/>
<use href="#hole" x="452.0" y="524.6"/>
<use href="#hole" x="464.3" y="524.6"/>
<use href="#hole" x="476.5" y="524.6"/>
<use href="#hole" x="488.7" y="524.6"/>
<use href="#hole" x="501.0" y="524.6"/>
<use href="#hole" x="513.2" y="524.6"/>
<use href="#hole" x="525.4" y="524.6"/>
<use href="#hole" x="537.6" y="524.6"/>
<use href="#hole" x="549.9" y="524.6"/>
<text transform="translate(345.500 524.6) rotate(-90)" text-anchor="middle" font-size="7.500" fill="#cbcbcb">D</text>
<text transform="translate(562.500 524.6) rotate(-90)" text-anchor="middle" font-size="7.500" fill="#cbcbcb">D</text>
<use href="#hole" x="354.2" y="536.9"/>
<use href="#hole" x="366.4" y="536.9"/>
<use href="#hole" x="378.7" y="536.9"/>
<use href="#hole" x="390.9" y="536.9"/>
<use href="#hole" x="403.1" y="536.9"/>
<use href="#hole" x="415.4" y="536.9"/>
<use href="#hole" x="427.6" y="536.9"/>
<use href="#hole" x="439.8" y="536.9"/>
<use href="#hole" x="452.0" y="536.9"/>
<use href="#hole" x="464.3" y="536.9"/>
<use href="#hole" x="476.5" y="536.9"/>
<use href="#hole" x="488.7" y="536.9"/>
<use href="#hole" x="501.0" y="536.9"/>
<use href="#hole" x="513.2" y="536.9"/>
<use href="#hole" x="525.4" y="536.9"/>
<use href="#hole" x="537.6" y="536.9"/>
<use href="#hole" x="549.9" y="536.9"/>
<text transform="translate(345.500 536.9) rotate(-90)" text-anchor="middle" font-size="7.500" fill="#cbcbcb">C</text>
<text transform="translate(562.500 536.9) rotate(-90)" text-anchor="middle" font-size="7.500" fill="#cbcbcb">C</text>
<use href="#hole" x="354.2" y="549.1"/>
<use href="#hole" x="366.4" y="549.1"/>
<use href="#hole" x="378.7" y="549.1"/>
<use href="#hole" x="390.9" y="549.1"/>
<use href="#hole" x="403.1" y="549.1"/>
<use href="#hole" x="415.4" y="549.1"/>
<use href="#hole" x="427.6" y="549.1"/>
<use href="#hole" x="439.8" y="549.1"/>
<use href="#hole" x="452.0" y="549.1"/>
<use href="#hole" x="464.3" y="549.1"/>
<use href="#hole" x="476.5" y="549.1"/>
<use href="#hole" x="488.7" y="549.1"/>
<use href="#hole" x="501.0" y="549.1"/>
<use href="#hole" x="513.2" y="549.1"/>
<use href="#hole" x="525.4" y="549.1"/>
<use href="#hole" x="537.6" y="549.1"/>
<use href="#hole" x="549.9" y="549.1"/>
<text transform="translate(345.500 549.1) rotate(-90)" text-anchor="middle" font-size="7.500" fill="#cbcbcb">B</text>
<text transform="translate(562.500 549.1) rotate(-90)" text-anchor="middle" font-size="7.500" fill="#cbcbcb">B</text>
<use href="#hole" x="354.2" y="561.3"/>
<use href="#hole" x="366.4" y="561.3"/>
<use href="#hole" x="378.7" y="561.3"/>
<use href="#hole" x="390.9" y="561.3"/>
<use href="#hole" x="403.1" y="561.3"/>
<use href="#hole" x="415.4" y="561.3"/>
<use href="#hole" x="427.6" y="561.3"/>
<use href="#hole" x="439.8" y="561.3"/>
<use href="#hole" x="452.0" y="561.3"/>
<use href="#hole" x="464.3" y="561.3"/>
<use href="#hole" x="476.5" y="561.3"/>
<use href="#hole" x="488.7" y="561.3"/>
<use href="#hole" x="501.0" y="561.3"/>
<use href="#hole" x="513.2" y="561.3"/>
<use href="#hole" x="525.4" y="561.3"/>
<use href="#hole" x="537.6" y="561.3"/>
<use href="#hole" x="549.9" y="561.3"/>
<text transform="translate(345.500 561.3) rotate(-90)" text-anchor="middle" font-size="7.500" fill="#cbcbcb">A</text>
<text transform="translate(562.500 561.3) rotate(-90)" text-anchor="middle" font-size="7.500" fill="#cbcbcb">A</text>
<text transform="translate(356.8 416.500) rotate(-90)" text-anchor="middle" font-size="7.500" fill="#cbcbcb">1</text>
<text transform="translate(356.8 571.500) rotate(-90)" text-anchor="middle" font-size="7.500" fill="#cbcbcb">1</text>
<text transform="translate(369.0 416.500) rotate(-90)" text-anchor="middle" font-size="7.500" fill="#cbcbcb">2</text>
<text transform="translate(369.0 571.500) rotate(-90)" text-anchor="middle" font-size="7.500" fill="#cbcbcb">2</text>
<text transform="translate(381.3 416.500) rotate(-90)" text-anchor="middle" font-size="7.500" fill="#cbcbcb">3</text>
<text transform="translate(381.3 571.500) rotate(-90)" text-anchor="middle" font-size="7.500" fill="#cbcbcb">3</text>
<text transform="translate(393.5 416.500) rotate(-90)" text-anchor="middle" font-size="7.500" fill="#cbcbcb">4</text>
<text transform="translate(393.5 571.500) rotate(-90)" text-anchor="middle" font-size="7.500" fill="#cbcbcb">4</text>
<text transform="translate(405.7 416.500) rotate(-90)" text-anchor="middle" font-size="7.500" fill="#cbcbcb">5</text>
<text transform="translate(405.7 571.500) rotate(-90)" text-anchor="middle" font-size="7.500" fill="#cbcbcb">5</text>
<text transform="translate(418.0 416.500) rotate(-90)" text-anchor="middle" font-size="7.500" fill="#cbcbcb">6</text>
<text transform="translate(418.0 571.500) rotate(-90)" text-anchor="middle" font-size="7.500" fill="#cbcbcb">6</text>
<text transform="translate(430.2 416.500) rotate(-90)" text-anchor="middle" font-size="7.500" fill="#cbcbcb">7</text>
<text transform="translate(430.2 571.500) rotate(-90)" text-anchor="middle" font-size="7.500" fill="#cbcbcb">7</text>
<text transform="translate(442.4 416.500) rotate(-90)" text-anchor="middle" font-size="7.500" fill="#cbcbcb">8</text>
<text transform="translate(442.4 571.500) rotate(-90)" text-anchor="middle" font-size="7.500" fill="#cbcbcb">8</text>
<text transform="translate(454.6 416.500) rotate(-90)" text-anchor="middle" font-size="7.500" fill="#cbcbcb">9</text>
<text transform="translate(454.6 571.500) rotate(-90)" text-anchor="middle" font-size="7.500" fill="#cbcbcb">9</text>
<text transform="translate(466.9 416.500) rotate(-90)" text-anchor="middle" font-size="7.500" fill="#cbcbcb">10</text>
<text transform="translate(466.9 571.500) rotate(-90)" text-anchor="middle" font-size="7.500" fill="#cbcbcb">10</text>
<text transform="translate(479.1 416.500) rotate(-90)" text-anchor="middle" font-size="7.500" fill="#cbcbcb">11</text>
<text transform="translate(479.1 571.500) rotate(-90)" text-anchor="middle" font-size="7.500" fill="#cbcbcb">11</text>
<text transform="translate(491.3 416.500) rotate(-90)" text-anchor="middle" font-size="7.500" fill="#cbcbcb">12</text>
<text transform="translate(491.3 571.500) rotate(-90)" text-anchor="middle" font-size="7.500" fill="#cbcbcb">12</text>
<text transform="translate(503.6 416.500) rotate(-90)" text-anchor="middle" font-size="7.500" fill="#cbcbcb">13</text>
<text transform="translate(503.6 571.500) rotate(-90)" text-anchor="middle" font-size="7.500" fill="#cbcbcb">13</text>
<text transform="translate(515.8 416.500) rotate(-90)" text-anchor="middle" font-size="7.500" fill="#cbcbcb">14</text>
<text transform="translate(515.8 571.500) rotate(-90)" text-anchor="middle" font-size="7.500" fill="#cbcbcb">14</text>
<text transform="translate(528.0 416.500) rotate(-90)" text-anchor="middle" font-size="7.500" fill="#cbcbcb">15</text>
<text transform="translate(528.0 571.500) rotate(-90)" text-anchor="middle" font-size="7.500" fill="#cbcbcb">15</text>
<text transform="translate(540.2 416.500) rotate(-90)" text-anchor="middle" font-size="7.500" fill="#cbcbcb">16</text>
<text transform="translate(540.2 571.500) rotate(-90)" text-anchor="middle" font-size="7.500" fill="#cbcbcb">16</text>
<text transform="translate(552.5 416.500) rotate(-90)" text-anchor="middle" font-size="7.500" fill="#cbcbcb">17</text>
<text transform="translate(552.5 571.500) rotate(-90)" text-anchor="middle" font-size="7.500" fill="#cbcbcb">17</text>
</g>
<g id="mm">
<rect x="124.300" y="411.800" width="173.600" height="56.300" rx="4" fill="#f2ae1c"/>
<rect x="131.600" y="419.200" width="143.400" height="41.600" fill="#dde7ea" stroke="#555a5c" stroke-width="2.200"/>
<text x="265" y="449" text-anchor="end" font-size="24" font-weight="bold" fill="#555a5c" textLength="84" lengthAdjust="spacingAndGlyphs">241 mV</text>
<circle cx="286.700" cy="424.2" r="5" fill="none" stroke="#555a5c" stroke-width="1"/><text x="286.700" y="426.8" text-anchor="middle" font-size="7.500" fill="#555a5c">A</text>
<circle cx="286.700" cy="440" r="5.600" fill="#555a5c"/><text x="286.700" y="442.6" text-anchor="middle" font-size="7.500" font-weight="bold" fill="#f2ae1c">V</text>
<circle cx="286.700" cy="454.6" r="5" fill="none" stroke="#555a5c" stroke-width="1"/><text x="286.700" y="457.20000000000005" text-anchor="middle" font-size="7.500" fill="#555a5c">R</text>
<path d="M201.500 468h7v4.500l-2.200 3.500h-2.600l-2.200-3.500z" fill="#2b2b2b"/><path d="M213.500 468h7v4.500l-2.200 3.500h-2.600l-2.200-3.500z" fill="#d31820"/>
</g>
<g filter="url(#lsh)"><rect x="142.5" y="112.6" width="100" height="36.4" rx="6" fill="#fff"/>
<path d="M241.5 130.8L251.5 137.8L241.5 143.8z" fill="#fff"/>
</g>
<text x="152.2" y="136.1" font-size="15" fill="#3a506b">Arduino uno</text>
<use href="#minus" x="262.9" y="137.8"/>
<g filter="url(#lsh)"><rect x="98.5" y="362.6" width="89" height="36.2" rx="6" fill="#fff"/>
<path d="M186.5 374.5L196.5 381.5L186.5 387.5z" fill="#fff"/>
</g>
<text x="107.8" y="386.00000000000006" font-size="15" fill="#3a506b">multimeter</text>
<use href="#minus" x="207.9" y="381.5"/>
<g filter="url(#lsh)"><rect x="270.8" y="540.3" width="58.5" height="36.6" rx="6" fill="#fff"/>
<path d="M271.8 559L261.8 566L271.8 572z" fill="#fff"/>
</g>
<text x="280" y="563.8999999999999" font-size="15" fill="#3a506b">circuit</text>
<use href="#minus" x="250" y="566"/>
<path d="M482.600 354V360.500Q482.600 369.300 473.500 369.300H366.500Q354.200 369.300 354.200 381.500V426.800" fill="none" stroke="#e51c23" stroke-width="3.0" stroke-linecap="round" stroke-linejoin="round"/>
<path d="M494.300 354V363C494.300 376 480 377 462 377C448 377 443 380 443 392V423C443 430 436 433 427.600 439" fill="none" stroke="#373a3d" stroke-width="3.0" stroke-linecap="round" stroke-linejoin="round"/>
<path d="M506.500 354V363C506.500 372 516 370.500 520 376C524.500 382 523.800 392 525 400C526.800 416 531 428 537.600 439" fill="none" stroke="#373a3d" stroke-width="3.0" stroke-linecap="round" stroke-linejoin="round"/>
<path d="M438.400 122V114Q438.400 103.200 449 103.200H636.500Q648.300 103.200 648.300 115V479Q648.300 491 637 491H563" fill="none" stroke="#0f9bd7" stroke-width="3.0" stroke-linecap="round" stroke-linejoin="round"/>
<path d="M450.600 122V117Q450.600 106.800 460.500 106.800H643Q655.200 106.800 655.200 119V436Q655.200 449.500 641 450L598.500 451.200" fill="none" stroke="#d8208c" stroke-width="3.0" stroke-linecap="round" stroke-linejoin="round"/>
<path d="M579.500 122V119Q579.500 110.500 588 110.500H624Q634 110.500 634 120.500V577Q634 587 624 587H381Q371 587 371 577V484C371 470 385 467 403.500 463.500" fill="none" stroke="#f5870e" stroke-width="3.0" stroke-linecap="round" stroke-linejoin="round"/>
<path d="M205 474V488Q205 498.900 216 498.900H385C402 498.900 412 486 427.600 475.700" fill="none" stroke="#373a3d" stroke-width="3.0" stroke-linecap="round" stroke-linejoin="round"/>
<path d="M217 474V485Q217 493.200 225 493.200H368C388 493.200 396 486 403 475.700" fill="none" stroke="#e51c23" stroke-width="3.0" stroke-linecap="round" stroke-linejoin="round"/>
<path d="M403.300 475.700H415.200" fill="none" stroke="#3fb93c" stroke-width="3.0" stroke-linecap="round" stroke-linejoin="round"/>
<path d="M403.300 475.700V486C403.300 500 420 498 428 508C437 519 438 540 447 549C456 557 470 558 488.700 561.300" fill="none" stroke="#3fb93c" stroke-width="3.0" stroke-linecap="round" stroke-linejoin="round"/>
<path d="M427.600 426.800V419C427.600 406 452.500 404 452.500 424L457.300 530C457.600 540 460 545 464.200 549.100" fill="none" stroke="#3fb93c" stroke-width="3.0" stroke-linecap="round" stroke-linejoin="round"/>
<path d="M513 475.700L514.600 490.500" fill="none" stroke="#3fb93c" stroke-width="2.8" stroke-linecap="round" stroke-linejoin="round"/>
<path d="M501.0 451.300H537.6" fill="none" stroke="#373a3d" stroke-width="3.6" stroke-linecap="round" stroke-linejoin="round"/>
<path d="M354 451.3H403.5" stroke="#9a9a9a" stroke-width="1.800" stroke-linecap="round"/>
<path d="M361 451.3c0-4 2-6 5-6c3 0 4 1.800 7 1.800h10.600c3 0 4-1.800 7-1.800c3 0 5 2 5 6c0 4-2 6-5 6c-3 0-4-1.800-7-1.800h-10.600c-3 0-4 1.800-7 1.800c-3 0-5-2-5-6z" fill="#d9b27a"/>
<rect x="366.5" y="445.7" width="2.6" height="11.2" fill="#8b4a17"/>
<rect x="372" y="447.1" width="4" height="8.4" fill="#111"/>
<rect x="378.5" y="447.1" width="4.2" height="8.4" fill="#ff8a1c"/>
<rect x="388.6" y="445.7" width="1.3" height="11.2" fill="#d6c42a"/>
<path d="M549.7 451.3H598.5" stroke="#9a9a9a" stroke-width="1.800" stroke-linecap="round"/>
<path d="M556.5 451.3c0-4 2-6 5-6c3 0 4 1.800 7 1.800h10.600c3 0 4-1.800 7-1.800c3 0 5 2 5 6c0 4-2 6-5 6c-3 0-4-1.800-7-1.800h-10.600c-3 0-4 1.800-7 1.800c-3 0-5-2-5-6z" fill="#d9b27a"/>
<rect x="562.0" y="445.7" width="2.6" height="11.2" fill="#8b4a17"/>
<rect x="567.5" y="447.1" width="4" height="8.4" fill="#111"/>
<rect x="574.0" y="447.1" width="4.2" height="8.4" fill="#8b4a17"/>
<rect x="584.1" y="445.7" width="1.3" height="11.2" fill="#d6c42a"/>
<path d="M514.6 490.8H563" stroke="#9a9a9a" stroke-width="1.800" stroke-linecap="round"/>
<path d="M521.5 490.8c0-4 2-6 5-6c3 0 4 1.800 7 1.800h10.600c3 0 4-1.800 7-1.800c3 0 5 2 5 6c0 4-2 6-5 6c-3 0-4-1.800-7-1.800h-10.600c-3 0-4 1.800-7 1.800c-3 0-5-2-5-6z" fill="#d9b27a"/>
<rect x="527.0" y="485.2" width="2.6" height="11.2" fill="#8b4a17"/>
<rect x="532.5" y="486.6" width="4" height="8.4" fill="#111"/>
<rect x="539.0" y="486.6" width="4.2" height="8.4" fill="#8b4a17"/>
<rect x="549.1" y="485.2" width="1.3" height="11.2" fill="#d6c42a"/>
<path d="M415.300 466V475.700M427.700 466V475.700" stroke="#9a9a9a" stroke-width="2.200" stroke-linecap="round" fill="none"/>
<circle cx="421.600" cy="455" r="13" fill="#e9e2b4" stroke="#b8652a" stroke-width="1.600"/>
<path d="M415 446.500h11.500a2.100 2.100 0 0 1 0 4.200h-10a2.100 2.100 0 0 0 0 4.200h10a2.100 2.100 0 0 1 0 4.200h-10a2.100 2.100 0 0 0 0 4.200h11.500" fill="none" stroke="#c0662a" stroke-width="1.500"/>
<path d="M500.8 418V426.8M509.0 418L513 426.8" stroke="#9a9a9a" stroke-width="2" stroke-linecap="round" fill="none"/>
<path d="M496.7 410.500a8.800 3 0 0 0 17.600 0v5a8.800 3 0 0 1 -17.600 0z" fill="#27912f"/>
<path d="M497.5 411V400a8 8 0 0 1 16 0V411a8 2.600 0 0 1 -16 0z" fill="#3df751"/>
<ellipse cx="505.500" cy="409.500" rx="6.500" ry="1.800" fill="#9dfca6"/>
<path d="M537.6999999999999 418V426.8M545.9 418L549.7 426.8" stroke="#9a9a9a" stroke-width="2" stroke-linecap="round" fill="none"/>
<path d="M533.6 410.500a8.800 3 0 0 0 17.600 0v5a8.800 3 0 0 1 -17.600 0z" fill="#8a2a2c"/>
<path d="M534.4 411V400a8 8 0 0 1 16 0V411a8 2.600 0 0 1 -16 0z" fill="#7f2022"/>
<path d="M464.100 530V537.500M488.600 530V537.500" stroke="#9a9a9a" stroke-width="2.200" stroke-linecap="round"/>
<path d="M458.600 484.500a18 8 0 0 1 36 0V519q-.300 1.500-1.500 2q1.500.500 1.500 2v3.500a18 8 0 0 1 -36 0V523q0-1.500 1.500-2q-1.200-.500-1.500-2z" fill="#333537"/>
<path d="M460.500 490v28.500q.200 1.300 1.300 2q-1.300.700-1.300 2v3l3.300 3.600V493.500z" fill="#757a7f"/>
<ellipse cx="476.600" cy="484.800" rx="14.600" ry="6.300" fill="#d0d0d0"/>
<path d="M680.500 497.500V513.500L684.300 510L686.800 515.800L689 514.800L686.500 509.200H691.600z" fill="#fff" stroke="#000" stroke-width="1" stroke-linejoin="round"/>
</svg><!--/CANVAS-->
</div>
<div id="panel" class="abs">
  <div id="phead" class="abs"><div class="abs" style="left:15px;top:14px;font-size:15px;line-height:18px;color:#324b6a">Text</div>
    <div class="vdiv" style="left:249px;height:49px"></div><div class="vdiv" style="left:406px;height:49px"></div>
    <div class="hb" style="left:267px"><svg width="35" height="30" viewBox="0 0 35 30"><path d="M16 8.800h4v5.500h3.200L18 21.300l-5.200-7h3.200z" fill="#000"/><path d="M9 23h18" stroke="#000" stroke-width="2"/></svg></div>
    <div class="hb" style="left:313px"><svg width="35" height="30" viewBox="0 0 35 30"><path d="M12.900 7h10.500l3.600 5.900h-18z" fill="#324b6a"/><path d="M12 8.700h12.300M11.200 10.300h14" stroke="#f4f5f7" stroke-width=".6"/><path d="M9 12.700h18v9.100q0 1-1 1h-16q-1 0-1-1z" fill="#324b6a"/><rect x="14" y="16" width="8.300" height="1.400" fill="#f4f5f7"/></svg></div>
    <div class="hb" style="left:359px"><svg width="35" height="30" viewBox="0 0 35 30"><g fill="#324b6a"><path d="M18 8.200c2 0 3.200 1.400 3.600 3.400c1 2 1.100 5.500.6 8.400c-.4 2.200-1.500 3.600-2.600 3.800l-.9-3.500h-1.400l-.9 3.500c-1.100-.2-2.200-1.600-2.600-3.800c-.5-2.900-.4-6.400.6-8.400c.4-2 1.600-3.400 3.600-3.400z"/></g><g stroke="#324b6a" stroke-width="1.300" fill="none"><path d="M16.600 9.500L14.200 6.200M19.400 9.500l2.400-3.300M14.500 13.500l-3-2.200-1.500.8M21.500 13.500l3-2.200 1.500.8M14 16.800l-3.500.3-1 1.200M22 16.800l3.500.3 1 1.200M14.300 19.500l-2.300 1.300-.8 2.200M21.700 19.500l2.300 1.300.8 2.200"/></g></svg></div>
    <div class="abs" style="left:414px;top:6px;width:186px;height:34px;border:1px solid #e4e7ed;border-radius:3px;background:#f6f7f9;box-shadow:0 1px 2px rgba(80,100,140,.12)"><div class="abs" style="left:10px;top:7px;font-size:14.500px;line-height:18px;color:#324b6a;white-space:nowrap">1 (Arduino Uno R3)</div><svg class="abs" style="left:160px;top:13px" width="10" height="6" viewBox="0 0 10 6"><path d="M0.500 0.500h9L5 5.200z" fill="#111"/></svg></div></div>
  <div id="gutter" class="abs"></div>
  <div id="lnums" class="abs">1
2
3
4
5
6
7
8
9
10
11
12
13
14
15
16
17
18
19
20
21</div>
  <div id="code" class="abs"><span class="k">const</span> <span class="k">int</span> lightsensorPin = <span class="n">2</span>;
<span class="k">const</span> <span class="k">int</span> redledPin = <span class="n">12</span>;
<span class="k">const</span> <span class="k">int</span> greenledPin13 = <span class="n">13</span>;
<span class="k">int</span> sensorState = <span class="n">0</span>;
<span class="k">void</span> setup() {
pinMode(redledPin, OUTPUT);
pinMode(greenledPin13, OUTPUT);
pinMode(lightsensorPin, INPUT);
}
<span class="k">void</span> loop(){
sensorState = digitalRead(lightsensorPin);
<span class="k">if</span> (sensorState == HIGH) {
digitalWrite(redledPin, HIGH);
digitalWrite(greenledPin13, LOW);
}
<span class="k">else</span> {
digitalWrite(redledPin, LOW);
digitalWrite(greenledPin13, HIGH);
}
}
</div>
  <div id="serial" class="abs"><svg class="abs" style="left:8px;top:7px" width="23" height="16.300" viewBox="0 0 24 17"><rect x="0.800" y="0.800" width="22.400" height="15.400" rx="1" fill="none" stroke="#111" stroke-width="1.600"/><rect x="0.800" y="0.800" width="22.400" height="3.600" fill="#111"/><path d="M2.500 2h1.500v1.200H2.500zM5 2h1.500v1.200H5zM7.500 2h1.500v1.200H7.500z" fill="#fff"/><rect x="14.500" y="9.500" width="8" height="6" fill="#111"/><rect x="16" y="12.300" width="5" height="1.200" fill="#fff"/></svg><div class="abs" style="left:39px;top:5px;font-size:14px;line-height:18px;color:#324b6a">Serial Monitor</div><svg class="abs" style="left:588px;top:11px" width="9" height="6" viewBox="0 0 9 6"><path d="M0.300 5.500h8.400L4.500 0.500z" fill="#111"/></svg></div>
</div>
</body></html>
